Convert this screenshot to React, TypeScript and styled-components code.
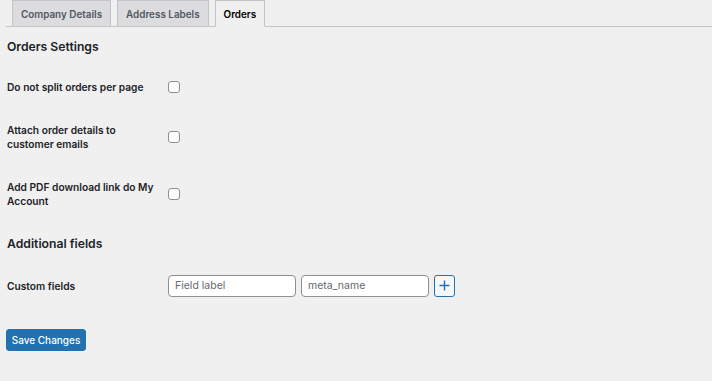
import React, { useState } from 'react';
import styled, { createGlobalStyle } from 'styled-components';

const GlobalStyle = createGlobalStyle`
  html, body {
    margin: 0;
    padding: 0;
    background: #f0f0f1;
  }
  body {
    font-family: Inter, "Liberation Sans", sans-serif;
    color: #1d2327;
  }
`;

const tabs = ['Company Details', 'Address Labels', 'Orders'];

const App = () => {
    const [activeTab, setActiveTab] = useState('Orders');
    const [checks, setChecks] = useState([false, false, false]);

    const toggle = (index: number) => {
        setChecks(prev => prev.map((c, i) => (i === index ? !c : c)));
    };

    return (
        <Page>
            <GlobalStyle />
            <TabBar>
                {tabs.map(tab => (
                    <Tab key={tab} active={tab === activeTab} onClick={() => setActiveTab(tab)}>
                        {tab}
                    </Tab>
                ))}
            </TabBar>

            <Content>
                <SectionTitle>Orders Settings</SectionTitle>
                <FormTable>
                    <Row>
                        <RowLabel>Do not split orders per page</RowLabel>
                        <RowField><Checkbox checked={checks[0]} onChange={() => toggle(0)} /></RowField>
                    </Row>
                    <Row>
                        <RowLabel>Attach order details to customer emails</RowLabel>
                        <RowField><Checkbox checked={checks[1]} onChange={() => toggle(1)} /></RowField>
                    </Row>
                    <Row>
                        <RowLabel>Add PDF download link do My Account</RowLabel>
                        <RowField><Checkbox checked={checks[2]} onChange={() => toggle(2)} /></RowField>
                    </Row>
                </FormTable>

                <SectionTitle>Additional fields</SectionTitle>
                <FormTable gap={8}>
                    <Row>
                        <RowLabel>Custom fields</RowLabel>
                        <RowField>
                            <TextInput type="text" placeholder="Field label" />
                            <TextInput type="text" placeholder="meta_name" />
                            <AddButton type="button" aria-label="Add field">
                                <svg width="11" height="11" viewBox="0 0 11 11">
                                    <path d="M5.5 0.5v10M0.5 5.5h10" stroke="#2271b1" strokeWidth="1.4" fill="none" />
                                </svg>
                            </AddButton>
                        </RowField>
                    </Row>
                </FormTable>

                <SaveButton type="button">Save Changes</SaveButton>
            </Content>
        </Page>
    );
};

const Page = styled.div`
  width: 712px;
  min-height: 381px;
`;

const TabBar = styled.div`
  display: flex;
  align-items: flex-end;
  gap: 6px;
  height: 26px;
  margin-left: 6px;
  padding-left: 6px;
  border-bottom: 1px solid #c3c4c7;
`;

const Tab = styled.div<{ active?: boolean }>`
  display: flex;
  align-items: center;
  height: 25px;
  padding: 0 8px;
  margin-bottom: -1px;
  border: 1px solid #c3c4c7;
  border-bottom-color: ${p => (p.active ? '#f0f0f1' : '#c3c4c7')};
  background: ${p => (p.active ? '#f0f0f1' : '#dcdcde')};
  color: ${p => (p.active ? '#000' : '#50575e')};
  font-size: 9.9px;
  font-weight: 600;
  cursor: pointer;
`;

const Content = styled.div`
  padding: 0 7px;
`;

const SectionTitle = styled.h2`
  margin: 11px 0 0;
  font-size: 12.2px;
  line-height: 17px;
  font-weight: 600;
  color: #1d2327;
`;

const FormTable = styled.div<{ gap?: number }>`
  margin-top: ${p => p.gap ?? 10}px;
  display: flex;
  flex-direction: column;
  & + h2 {
    margin-top: 13px;
  }
`;

const Row = styled.div`
  display: grid;
  grid-template-columns: 161px 1fr;
  align-items: center;
  padding: 14.5px 0;
`;

const RowLabel = styled.label`
  font-size: 10.2px;
  line-height: 14px;
  font-weight: 600;
  padding-right: 12px;
  color: #1d2327;
`;

const RowField = styled.div`
  display: flex;
  align-items: center;
  gap: 5px;
`;

const Checkbox = styled.input.attrs({ type: 'checkbox' })`
  appearance: none;
  width: 12px;
  height: 12px;
  margin: 0;
  border: 1px solid #8c8f94;
  border-radius: 3px;
  background: #fff;
  cursor: pointer;
  &:checked {
    background: #2271b1;
    border-color: #2271b1;
  }
`;

const TextInput = styled.input`
  box-sizing: border-box;
  width: 128px;
  height: 22px;
  margin: 0;
  padding: 0 6px;
  border: 1px solid #8c8f94;
  border-radius: 4px;
  background: #fff;
  font-family: inherit;
  font-size: 10.5px;
  color: #2c3338;
  &::placeholder {
    color: #646970;
  }
`;

const AddButton = styled.button`
  box-sizing: border-box;
  display: flex;
  align-items: center;
  justify-content: center;
  width: 21px;
  height: 22px;
  padding: 0;
  border: 1px solid #2271b1;
  border-radius: 3px;
  background: #f6f7f7;
  cursor: pointer;
`;

const SaveButton = styled.button`
  box-sizing: border-box;
  display: block;
  margin: 18px 0 0 -1px;
  width: 80px;
  height: 22px;
  padding: 0;
  border: 1px solid #2271b1;
  border-radius: 3px;
  background: #2271b1;
  color: #fff;
  font-family: inherit;
  font-size: 10px;
  font-weight: 500;
  cursor: pointer;
`;

export default App;
